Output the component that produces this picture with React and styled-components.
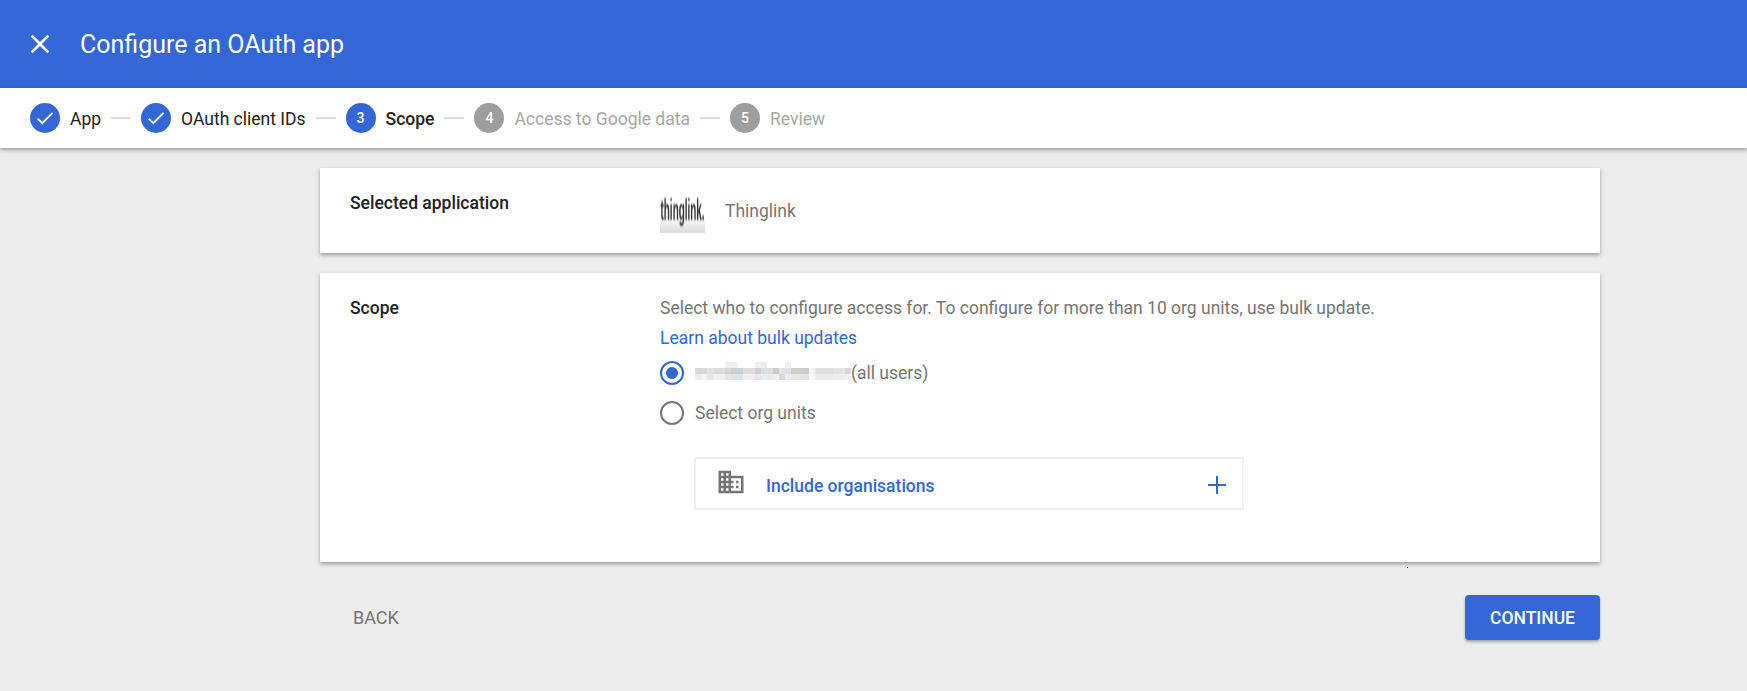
import { Fragment } from "react";
import styled, { createGlobalStyle } from "styled-components";

const GlobalStyle = createGlobalStyle`
  html, body {
    margin: 0;
    padding: 0;
    background: #ededed;
    font-family: Roboto, "Liberation Sans", sans-serif;
  }
`;

const Page = styled.div`
  position: relative;
  min-height: 691px;
  background: #ededed;
  overflow: hidden;
`;

const Header = styled.header`
  height: 88px;
  background: #3367d6;
  display: flex;
  align-items: center;
  padding-left: 24px;
  color: #fff;
`;

const CloseButton = styled.div`
  width: 32px;
  height: 32px;
  margin-right: 24px;
  display: flex;
`;

const Title = styled.h1`
  margin: 0;
  font-size: 25px;
  font-weight: 400;
`;

const Stepper = styled.nav`
  position: relative;
  height: 60px;
  background: #fff;
  display: flex;
  align-items: center;
  padding-left: 30px;
  gap: 10px;
  box-shadow: 0 2px 4px rgba(0, 0, 0, 0.35);
`;

const Circle = styled.div`
  width: 30px;
  height: 30px;
  border-radius: 50%;
  background: ${(p) => (p.$muted ? "#9e9e9e" : "#3367d6")};
  color: #fff;
  display: flex;
  align-items: center;
  justify-content: center;
  font-size: 14px;
  font-weight: 500;
`;

const StepLabel = styled.span`
  padding-top: 2px;
  font-size: 17.5px;
  font-weight: ${(p) => (p.$active ? 500 : 400)};
  color: ${(p) => (p.$muted ? "#a6a6a6" : "#212121")};
`;

const Connector = styled.div`
  width: 20px;
  height: 2px;
  background: #dcdcdc;
`;

const Main = styled.main`
  width: 1280px;
  margin-left: 320px;
  padding-top: 20px;
  display: flex;
  flex-direction: column;
`;

const Card = styled.section`
  background: #fff;
  box-shadow: 0 2px 4px rgba(0, 0, 0, 0.35);
  display: grid;
  grid-template-columns: 310px 1fr;
  padding: 0 30px;
  margin-bottom: 20px;
  height: ${(p) => p.$height}px;
  box-sizing: border-box;
`;

const Label = styled.div`
  font-size: 17.5px;
  font-weight: 500;
  color: #212121;
  padding-top: 26px;
  line-height: 19px;
`;

const AppRow = styled.div`
  display: flex;
  align-items: center;
  gap: 20px;
  height: 45px;
  margin-top: 20px;
`;

const Logo = styled.div`
  width: 45px;
  height: 45px;
  background: linear-gradient(#fff 0, #fff 62%, #dcdcdc 100%);
  font-family: "Liberation Sans", sans-serif;
  font-size: 16px;
  font-weight: 700;
  color: #333;
  overflow: hidden;
  display: flex;
  align-items: flex-start;
  justify-content: center;
`;

const LogoText = styled.span`
  display: block;
  transform: scaleX(0.62) scaleY(1.85);
  transform-origin: center top;
  margin-top: 6px;
  white-space: nowrap;
  filter: blur(0.5px);
`;

const Muted = styled.span`
  font-size: 17.5px;
  color: #757575;
`;

const ScopeBody = styled.div`
  display: flex;
  flex-direction: column;
  padding-top: 26px;
`;

const Description = styled.div`
  font-size: 17.5px;
  line-height: 19px;
  color: #757575;
`;

const Link = styled.a`
  font-size: 17.5px;
  line-height: 19px;
  margin-top: 11px;
  color: #3367d6;
  text-decoration: none;
`;

const RadioRow = styled.label`
  display: flex;
  align-items: center;
  gap: 11px;
  height: 24px;
  margin-top: ${(p) => p.$top}px;
`;

const Radio = styled.span`
  width: 24px;
  height: 24px;
  box-sizing: border-box;
  border-radius: 50%;
  border: 2px solid ${(p) => (p.$checked ? "#3367d6" : "#757575")};
  display: flex;
  align-items: center;
  justify-content: center;
  &::after {
    content: "";
    display: ${(p) => (p.$checked ? "block" : "none")};
    width: 12px;
    height: 12px;
    border-radius: 50%;
    background: #3367d6;
  }
`;

const RedactedGrid = styled.span`
  display: grid;
  grid-template-columns: repeat(26, 6px);
  grid-auto-rows: 6px;
  align-self: flex-start;
  margin-top: 1px;
`;

const RedactedCell = styled.span`
  display: block;
`;

const RadioText = styled.span`
  display: flex;
  align-items: center;
  font-size: 17.5px;
  color: #757575;
  height: 100%;
  line-height: 20px;
`;

const OrgBox = styled.div`
  margin: 32px 0 0 34px;
  width: 550px;
  height: 53px;
  box-sizing: border-box;
  border: 2px solid #f1f1f1;
  display: flex;
  align-items: center;
  padding: 0 16px 0 20px;
  color: #3367d6;
`;

const OrgIcon = styled.div`
  width: 30px;
  height: 30px;
  margin-right: 20px;
  margin-top: -4px;
  color: #757575;
`;

const OrgName = styled.span`
  flex: 1;
  font-size: 17.5px;
  font-weight: 500;
  position: relative;
  top: 2px;
`;

const PlusIcon = styled.svg`
  position: relative;
  top: 1px;
`;

const Actions = styled.div`
  display: flex;
  justify-content: space-between;
  align-items: center;
  margin-top: 13px;
`;

const BackButton = styled.button`
  margin-left: 33px;
  padding: 0;
  border: 0;
  background: none;
  font: 400 18px Roboto, sans-serif;
  color: #757575;
`;

const ContinueButton = styled.button`
  width: 135px;
  height: 45px;
  border: 0;
  border-radius: 4px;
  background: #3367d6;
  color: #fff;
  font: 500 17.5px Roboto, sans-serif;
  box-shadow: 0 2px 3px rgba(0, 0, 0, 0.3);
`;

const Speck = styled.div`
  position: absolute;
  left: 1407px;
  top: 567px;
  width: 1px;
  height: 1px;
  background: #222;
`;

const steps = [
  { label: "App", state: "done" },
  { label: "OAuth client IDs", state: "done" },
  { label: "Scope", state: "active" },
  { label: "Access to Google data", state: "todo" },
  { label: "Review", state: "todo" },
];

const W = "#ffffff";

// pixelated org name, three rows of 26 cells
const redacted = [
  [W, W, W, W, W, "#f0f0f0", "#eef2f5", W, W, W, "#f3eeee", "#e8eef2", W, W, W, "#eef2f4", W, W, W, W, W, W, W, W, W, W],
  ["#d8d8d8", "#d8d8d8", "#dfe3e8", "#dcdcdc", "#dcdcdc", "#d4d4d4", "#c8d0d6", "#c8d0d6", "#dcdcdc", "#dcdcdc", "#d0ced0", "#d8dee2", "#d8dee2", "#cfccc8", "#e0e4e6", "#e0e4e6", "#d0cdcc", "#d0cdcc", "#c8ccd4", "#f5f3ee", "#dedfe2", "#dedfe2", "#dedfe2", "#e4e4e4", "#e4e4e4", "#d8d8d8"],
  ["#ececec", "#f2f2f2", "#e6e8ec", "#f0f0f0", "#f0f0f0", "#e8e4de", "#dde3e6", "#dde3e6", "#eeeeee", "#eeeeee", "#e6e6e6", "#e8ecef", "#e8ecef", "#eeeeee", "#d8d8da", "#ececec", "#e8e4e0", "#e2e4e6", "#e2e4e6", "#fafafa", "#ececee", "#ececee", "#ececee", "#eeeeee", "#eeeeee", "#f2f2f2"],
];

const Check = () => (
  <svg width="22" height="22" viewBox="0 0 24 24" fill="#fff">
    <path d="M9 16.2 4.8 12l-1.4 1.4L9 19 21 7l-1.4-1.4z" />
  </svg>
);

const App = () => {
  return (
    <Page>
      <GlobalStyle />
      <Header>
        <CloseButton>
          <svg width="32" height="32" viewBox="0 0 24 24" fill="#fff">
            <path d="M19 6.41 17.59 5 12 10.59 6.41 5 5 6.41 10.59 12 5 17.59 6.41 19 12 13.41 17.59 19 19 17.59 13.41 12z" />
          </svg>
        </CloseButton>
        <Title>Configure an OAuth app</Title>
      </Header>
      <Stepper>
        {steps.map((step, i) => (
          <Fragment key={step.label}>
            {i > 0 && <Connector />}
            <Circle $muted={step.state === "todo"}>
              {step.state === "done" ? <Check /> : i + 1}
            </Circle>
            <StepLabel
              $active={step.state === "active"}
              $muted={step.state === "todo"}
            >
              {step.label}
            </StepLabel>
          </Fragment>
        ))}
      </Stepper>
      <Main>
        <Card $height={85}>
          <Label>Selected application</Label>
          <AppRow>
            <Logo>
              <LogoText>thinglink.</LogoText>
            </Logo>
            <Muted>Thinglink</Muted>
          </AppRow>
        </Card>
        <Card $height={289}>
          <Label>Scope</Label>
          <ScopeBody>
            <Description>
              Select who to configure access for. To configure for more than 10
              org units, use bulk update.
            </Description>
            <Link href="#">Learn about bulk updates</Link>
            <RadioRow $top={13}>
              <Radio $checked />
              <RadioText>
                <RedactedGrid>
                  {redacted.flat().map((c, i) => (
                    <RedactedCell key={i} style={{ background: c }} />
                  ))}
                </RedactedGrid>
                (all users)
              </RadioText>
            </RadioRow>
            <RadioRow $top={16}>
              <Radio />
              <RadioText>Select org units</RadioText>
            </RadioRow>
            <OrgBox>
              <OrgIcon>
                <svg width="30" height="30" viewBox="0 0 24 24" fill="currentColor">
                  <path d="M12 7V3H2v18h20V7H12zM6 19H4v-2h2v2zm0-4H4v-2h2v2zm0-4H4V9h2v2zm0-4H4V5h2v2zm4 12H8v-2h2v2zm0-4H8v-2h2v2zm0-4H8V9h2v2zm0-4H8V5h2v2zm10 12h-8v-2h2v-2h-2v-2h2v-2h-2V9h8v10zm-2-8h-2v2h2v-2zm0 4h-2v2h2v-2z" />
                </svg>
              </OrgIcon>
              <OrgName>Include organisations</OrgName>
              <PlusIcon width="18" height="18" viewBox="0 0 18 18" stroke="currentColor" strokeWidth="2">
                <path d="M9 0v18M0 9h18" />
              </PlusIcon>
            </OrgBox>
          </ScopeBody>
        </Card>
        <Actions>
          <BackButton>BACK</BackButton>
          <ContinueButton>CONTINUE</ContinueButton>
        </Actions>
      </Main>
      <Speck />
    </Page>
  );
};

export default App;
